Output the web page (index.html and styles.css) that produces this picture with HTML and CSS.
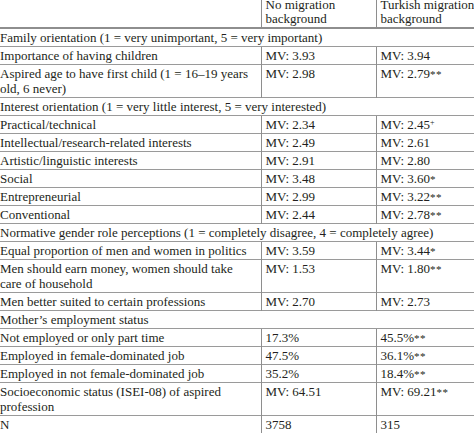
FILE: index.html
```html
<!DOCTYPE html>
<html>
<head>
<meta charset="utf-8">
<link rel="stylesheet" href="styles.css">
</head>
<body>
<table class="data">
  <colgroup>
    <col class="c-label">
    <col class="c-a">
    <col class="c-b">
  </colgroup>
  <thead>
    <tr>
      <th class="blank"></th>
      <th>No migration<br>background</th>
      <th>Turkish migration<br>background</th>
    </tr>
  </thead>
  <tbody>
    <tr class="section"><td colspan="3">Family orientation (1 = very unimportant, 5 = very important)</td></tr>
    <tr><td>Importance of having children</td><td>MV: 3.93</td><td>MV: 3.94</td></tr>
    <tr><td>Aspired age to have first child (1 = 16–19 years<br>old, 6 never)</td><td>MV: 2.98</td><td>MV: 2.79<span class="sig">**</span></td></tr>
    <tr class="section"><td colspan="3">Interest orientation (1 = very little interest, 5 = very interested)</td></tr>
    <tr><td>Practical/technical</td><td>MV: 2.34</td><td>MV: 2.45<sup class="plus">+</sup></td></tr>
    <tr><td>Intellectual/research-related interests</td><td>MV: 2.49</td><td>MV: 2.61</td></tr>
    <tr><td>Artistic/linguistic interests</td><td>MV: 2.91</td><td>MV: 2.80</td></tr>
    <tr><td>Social</td><td>MV: 3.48</td><td>MV: 3.60<span class="sig">*</span></td></tr>
    <tr><td>Entrepreneurial</td><td>MV: 2.99</td><td>MV: 3.22<span class="sig">**</span></td></tr>
    <tr><td>Conventional</td><td>MV: 2.44</td><td>MV: 2.78<span class="sig">**</span></td></tr>
    <tr class="section"><td colspan="3">Normative gender role perceptions (1 = completely disagree, 4 = completely agree)</td></tr>
    <tr><td>Equal proportion of men and women in politics</td><td>MV: 3.59</td><td>MV: 3.44<span class="sig">*</span></td></tr>
    <tr><td>Men should earn money, women should take<br>care of household</td><td>MV: 1.53</td><td>MV: 1.80<span class="sig">**</span></td></tr>
    <tr><td>Men better suited to certain professions</td><td>MV: 2.70</td><td>MV: 2.73</td></tr>
    <tr class="section"><td colspan="3">Mother’s employment status</td></tr>
    <tr><td>Not employed or only part time</td><td>17.3%</td><td>45.5%<span class="sig">**</span></td></tr>
    <tr><td>Employed in female-dominated job</td><td>47.5%</td><td>36.1%<span class="sig">**</span></td></tr>
    <tr><td>Employed in not female-dominated job</td><td>35.2%</td><td>18.4%<span class="sig">**</span></td></tr>
    <tr><td>Socioeconomic status (ISEI-08) of aspired<br>profession</td><td>MV: 64.51</td><td>MV: 69.21<span class="sig">**</span></td></tr>
    <tr><td>N</td><td>3758</td><td>315</td></tr>
  </tbody>
</table>
</body>
</html>
```

FILE: styles.css
```css
html, body {
  margin: 0;
  padding: 0;
  background: #ffffff;
  overflow: hidden;
}

.data {
  border-collapse: collapse;
  table-layout: fixed;
  width: 520px;
  margin-top: -2px;
  margin-left: -1px;
  font-family: "Liberation Serif", "Times New Roman", serif;
  font-size: 13px;
  color: #231f20;
}

.c-label { width: 262px; }
.c-a { width: 115px; }
.c-b { width: 143px; }

.data th {
  font-weight: normal;
  text-align: left;
  vertical-align: top;
  line-height: 14px;
  padding: 0 4px 1px 4px;
  border-left: 1px solid #8e8e8e;
  border-bottom: 2px solid #8e8e8e;
  white-space: nowrap;
}

.data th.blank {
  border-left: none;
}

.data td {
  vertical-align: top;
  line-height: 15px;
  padding: 1px 4px 1px 4px;
  border-top: 1px solid #9a9a9a;
  border-left: 1px solid #8e8e8e;
  white-space: nowrap;
}

.data td:first-child {
  border-left: none;
  padding-left: 1px;
}

.section td {
  border-left: none;
}

.sig {
  font-size: 11px;
  line-height: 0;
  letter-spacing: 0.5px;
}

.plus {
  font-size: 8px;
  line-height: 0;
  vertical-align: 4px;
}
```
